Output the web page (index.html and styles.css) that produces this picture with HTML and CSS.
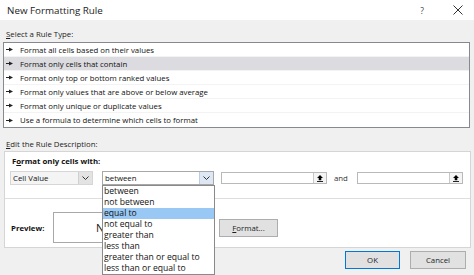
FILE: index.html
```html
<!DOCTYPE html>
<html lang="en">
<head>
  <meta charset="UTF-8">
  <title>New Formatting Rule</title>
  <link rel="stylesheet" href="styles.css">
</head>
<body>
  <svg class="defs" width="0" height="0">
    <symbol id="arrow" viewBox="0 0 7 5"><path d="M0 2.5h3" stroke="#222" stroke-width="1"/><path d="M3 0.5L7 2.5L3 4.5Z" fill="#222"/></symbol>
    <symbol id="chev" viewBox="0 0 7 4"><path d="M0.5 0.5L3.5 3.5L6.5 0.5" fill="none" stroke="#333" stroke-width="1"/></symbol>
    <symbol id="collapse" viewBox="0 0 7 8"><path d="M3.5 0L7 3.5H5V6H2V3.5H0Z" fill="#000"/><path d="M0 7.5h7" stroke="#000" stroke-width="1"/></symbol>
  </svg>

  <div class="titlebar">
    <span class="title">New Formatting Rule</span>
    <span class="help">?</span>
    <svg class="close" viewBox="0 0 10 10"><path d="M0.5 0.5L9.5 9.5M9.5 0.5L0.5 9.5" stroke="#333" stroke-width="1"/></svg>
  </div>

  <div class="content">
    <div class="group-label"><u>S</u>elect a Rule Type:</div>
    <ul class="rule-list">
      <li><svg class="bullet"><use href="#arrow"/></svg>Format all cells based on their values</li>
      <li class="selected"><svg class="bullet"><use href="#arrow"/></svg>Format only cells that contain</li>
      <li><svg class="bullet"><use href="#arrow"/></svg>Format only top or bottom ranked values</li>
      <li><svg class="bullet"><use href="#arrow"/></svg>Format only values that are above or below average</li>
      <li><svg class="bullet"><use href="#arrow"/></svg>Format only unique or duplicate values</li>
      <li><svg class="bullet"><use href="#arrow"/></svg>Use a formula to determine which cells to format</li>
    </ul>

    <div class="group-label second"><u>E</u>dit the Rule Description:</div>
    <div class="desc">
      <div class="desc-top">
        <div class="desc-title">F<u>o</u>rmat only cells with:</div>
        <div class="cond-row">
          <div class="combo readonly">
            <span class="combo-text">Cell Value</span>
            <span class="combo-btn"><svg class="chev"><use href="#chev"/></svg></span>
          </div>
          <div class="combo open">
            <span class="combo-text">between</span>
            <span class="combo-btn"><svg class="chev"><use href="#chev"/></svg></span>
            <ul class="dropdown">
              <li>between</li>
              <li>not between</li>
              <li class="hot">equal to</li>
              <li>not equal to</li>
              <li>greater than</li>
              <li>less than</li>
              <li>greater than or equal to</li>
              <li>less than or equal to</li>
            </ul>
          </div>
          <div class="ref-input">
            <span class="ref-btn"><svg class="collapse"><use href="#collapse"/></svg></span>
          </div>
          <span class="and">and</span>
          <div class="ref-input">
            <span class="ref-btn"><svg class="collapse"><use href="#collapse"/></svg></span>
          </div>
        </div>
      </div>
      <div class="desc-bottom">
        <span class="preview-label">Preview:</span>
        <div class="preview-box"><span class="preview-text">No Format Set</span></div>
        <button class="btn format-btn"><u>F</u>ormat...</button>
      </div>
    </div>

    <div class="footer">
      <button class="btn ok">OK</button>
      <button class="btn cancel">Cancel</button>
    </div>
  </div>
</body>
</html>
```

FILE: styles.css
```css
body { margin: 0; background: #f0f0f0; font-family: "Open Sans", "Noto Sans", sans-serif; font-size: 7.8px; color: #111; width: 474px; height: 275px; overflow: hidden; }
.defs { position: absolute; }
u { text-decoration: underline; text-underline-offset: 1px; }

.titlebar { height: 20px; background: #fff; display: flex; align-items: center; padding: 0 11px 0 7px; }
.title { font-size: 9.8px; color: #222; flex: 1; }
.help { font-size: 8.5px; color: #444; margin-right: 29px; }
.close { width: 10px; height: 10px; }

.content { padding: 0 4px 0 3px; }
.group-label { height: 16px; padding: 6px 0 0 3px; display: flex; align-items: center; color: #222; }
.group-label.second { height: 15px; padding-top: 8px; }

.rule-list { list-style: none; margin: 0; padding: 0; background: #fff; border: 1px solid #86898f; }
.rule-list li { height: 14px; display: flex; align-items: center; padding-left: 2px; border-bottom: 1px solid #f3f3f3; box-sizing: border-box; }
.rule-list li:last-child { border-bottom: none; }
.rule-list li.selected { background: #dcdce0; }
.bullet { width: 7px; height: 5px; margin-right: 7px; }

.desc { margin: 0 -1px 0 1px; background: #fff; border: 1px solid #d5d5d5; }
.desc-top { padding: 4px 0 13px 5px; border-bottom: 1px solid #dedede; }
.desc-title { font-weight: bold; height: 10px; line-height: 10px; padding-left: 2px; font-size: 7.8px; }
.cond-row { display: flex; align-items: center; margin-top: 5px; height: 14px; }

.combo { position: relative; height: 14px; box-sizing: border-box; display: flex; align-items: center; border: 1px solid #c9c9c9; flex-shrink: 0; }
.combo-text { flex: 1; padding-left: 2px; }
.combo-btn { width: 13px; height: 12px; display: flex; align-items: center; justify-content: center; }
.chev { width: 7px; height: 4px; }
.combo.readonly { width: 83px; background: #f4f4f4; border-color: #d6d6d6; }
.combo.readonly .combo-btn { background: #e3e3e3; border-left: 1px solid #d0d0d0; }
.combo.open { width: 112px; margin-left: 9px; background: #fff; border-color: #a8a8a8; }
.combo.open .combo-btn { background: #dde8f4; border-left: 1px solid #b9cde3; }

.dropdown { position: absolute; top: 13px; left: -1px; width: 113px; list-style: none; margin: 0; padding: 0; background: #fff; border: 1px solid #8a8a8a; box-sizing: border-box; z-index: 2; font-size: 8.6px; }
.dropdown li { height: 11px; line-height: 11px; padding-left: 1px; color: #111; white-space: nowrap; }
.dropdown li.hot { background: #99c8f5; }

.ref-input { width: 106px; height: 12px; margin-left: 7px; box-sizing: border-box; border: 1px solid #b9b9b9; background: #fff; display: flex; justify-content: flex-end; flex-shrink: 0; }
.ref-btn { width: 12px; height: 10px; border-left: 1px solid #c8c8c8; background: #f4f4f4; display: flex; align-items: center; justify-content: center; }
.collapse { width: 6px; height: 7px; }
.and { margin-left: 7px; width: 16px; color: #333; flex-shrink: 0; }

.desc-bottom { display: flex; align-items: center; padding: 13px 0 4px 6px; }
.preview-label { font-weight: bold; width: 42px; font-size: 7.8px; }
.preview-box { width: 160px; height: 31px; box-sizing: border-box; border: 1px solid #a8a8a8; display: flex; align-items: center; justify-content: center; }
.preview-text { font-size: 11px; }

.btn { font-family: inherit; font-size: 7.8px; color: #1e1e1e; background: #e1e1e1; border: 1px solid #adadad; height: 18px; padding: 0; box-sizing: border-box; }
.format-btn { width: 59px; margin-left: 6px; }
.footer { display: flex; justify-content: flex-end; gap: 10px; padding: 3px 4px 0 0; }
.ok { width: 55px; border-color: #0078d7; }
.cancel { width: 56px; }
```
